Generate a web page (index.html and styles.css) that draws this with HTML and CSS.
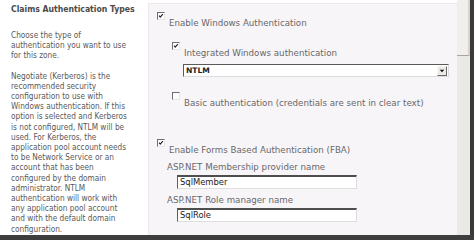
FILE: index.html
```html
<!DOCTYPE html>
<html lang="en">
<head>
    <meta charset="UTF-8">
    <title>Claims Authentication Types</title>
    <link rel="stylesheet" href="styles.css">
</head>
<body>
    <div class="frame">
        <div class="desc">
            <div class="desc-title">Claims Authentication Types</div>
            <p>Choose the type of authentication you want to use for this zone.</p>
            <p>Negotiate (Kerberos) is the recommended security configuration to use with Windows authentication. If this option is selected and Kerberos is not configured, NTLM will be used. For Kerberos, the application pool account needs to be Network Service or an account that has been configured by the domain administrator. NTLM authentication will work with any application pool account and with the default domain configuration.</p>
        </div>

        <div class="fields">
            <!-- Windows -->
            <div class="check-row">
                <span class="box checked"><svg viewBox="0 0 8 8"><polyline points="1.5,3.5 3,5.5 6.5,1.5"/></svg></span>
                <span class="check-label">Enable Windows Authentication</span>
            </div>
            <div class="sub">
                <div class="check-row row-2">
                    <span class="box checked"><svg viewBox="0 0 8 8"><polyline points="1.5,3.5 3,5.5 6.5,1.5"/></svg></span>
                    <span class="check-label">Integrated Windows authentication</span>
                </div>
                <div class="select">
                    <span class="select-value">NTLM</span>
                    <span class="select-btn"><svg viewBox="0 0 7 7"><polygon points="1.5,2.5 5.5,2.5 3.5,4.5"/></svg></span>
                </div>
                <div class="check-row row-3">
                    <span class="box"></span>
                    <span class="check-label">Basic authentication (credentials are sent in clear text)</span>
                </div>
            </div>

            <!-- Forms -->
            <div class="check-row row-4">
                <span class="box checked"><svg viewBox="0 0 8 8"><polyline points="1.5,3.5 3,5.5 6.5,1.5"/></svg></span>
                <span class="check-label">Enable Forms Based Authentication (FBA)</span>
            </div>
            <div class="fba">
                <div class="field-label">ASP.NET Membership provider name</div>
                <div class="text-input">SqlMember</div>
                <div class="field-label">ASP.NET Role manager name</div>
                <div class="text-input">SqlRole</div>
            </div>
        </div>

        <div class="scroll">
            <div class="scroll-thumb"></div>
        </div>
        <div class="edge"></div>
    </div>
    <div class="footer"></div>
</body>
</html>
```

FILE: styles.css
```css
body {
    margin: 0;
    width: 474px;
    height: 240px;
    overflow: hidden;
    background-color: #ffffff;
    font-family: "DejaVu Sans", Verdana, sans-serif;
}
.frame {
    display: flex;
    height: 235px;
}
.desc {
    width: 137px;
    padding: 3px 0 0 11px;
    background-color: #ffffff;
    font-family: "DejaVu Sans Condensed", "DejaVu Sans", sans-serif;
    font-size: 8.2px;
    line-height: 10.2px;
    color: #595959;
}
.desc-title {
    font-weight: bold;
    font-size: 8.6px;
    line-height: 12px;
    color: #4a4a4a;
    white-space: nowrap;
    margin-bottom: 15px;
}
.desc p {
    margin: 0 0 10px 0;
    width: 120px;
}
.fields {
    flex: 1;
    margin-top: 3px;
    padding: 8px 0 0 8px;
    background-color: #f8f5f8;
    border-top: 1px solid #ebe7eb;
    border-left: 1px solid #ebe7eb;
    font-size: 8.7px;
    color: #686868;
}
.check-row {
    display: flex;
    align-items: flex-start;
}
.box {
    width: 6px;
    height: 6px;
    background-color: #ffffff;
    border: 1px solid;
    border-color: #6e6e6e #e6e6e6 #e6e6e6 #6e6e6e;
    flex-shrink: 0;
}
.box svg {
    display: block;
    width: 6px;
    height: 6px;
}
.box polyline {
    fill: none;
    stroke: #222222;
    stroke-width: 1.6;
}
.check-label {
    margin: 6px 0 0 4px;
    line-height: 11px;
    white-space: nowrap;
}
.sub {
    padding-left: 15px;
}
.row-2 {
    margin-top: 13px;
}
.select {
    display: flex;
    align-items: center;
    width: 264px;
    height: 11px;
    margin: 5px 0 0 11px;
    background-color: #ffffff;
    border: 1px solid;
    border-color: #5a5a5a #dcdcdc #dcdcdc #5a5a5a;
}
.select-value {
    flex: 1;
    padding-left: 2px;
    font-weight: bold;
    font-size: 7.6px;
    color: #222222;
}
.select-btn {
    width: 8px;
    height: 8px;
    margin-right: 1px;
    background-color: #ece9e6;
    border: 1px solid;
    border-color: #f6f6f6 #6a6a6a #6a6a6a #f6f6f6;
}
.select-btn svg {
    display: block;
    width: 8px;
    height: 8px;
}
.select-btn polygon {
    fill: #111111;
}
.row-3 {
    margin-top: 15px;
}
.row-4 {
    margin-top: 30px;
}
.fba {
    padding-left: 10px;
}
.field-label {
    margin-top: 6px;
    line-height: 11px;
    white-space: nowrap;
}
.text-input {
    width: 176px;
    height: 11px;
    margin: 2px 0 0 10px;
    padding-left: 2px;
    background-color: #ffffff;
    border: 1px solid;
    border-top: 2px solid #4e4e4e;
    border-color: #4e4e4e #dedede #dedede #5e5e5e;
    font-size: 8.4px;
    line-height: 11px;
    color: #222222;
}
.scroll {
    width: 13px;
    background-color: #ebe9e5;
}
.scroll-thumb {
    height: 55px;
    background-color: #f1efec;
    border-right: 2px solid #d6d3ce;
    border-bottom: 1px solid #a9a6a1;
}
.edge {
    width: 4px;
    background-color: #3a3a3a;
}
.footer {
    height: 5px;
    background-color: #3e3e3e;
}
```
